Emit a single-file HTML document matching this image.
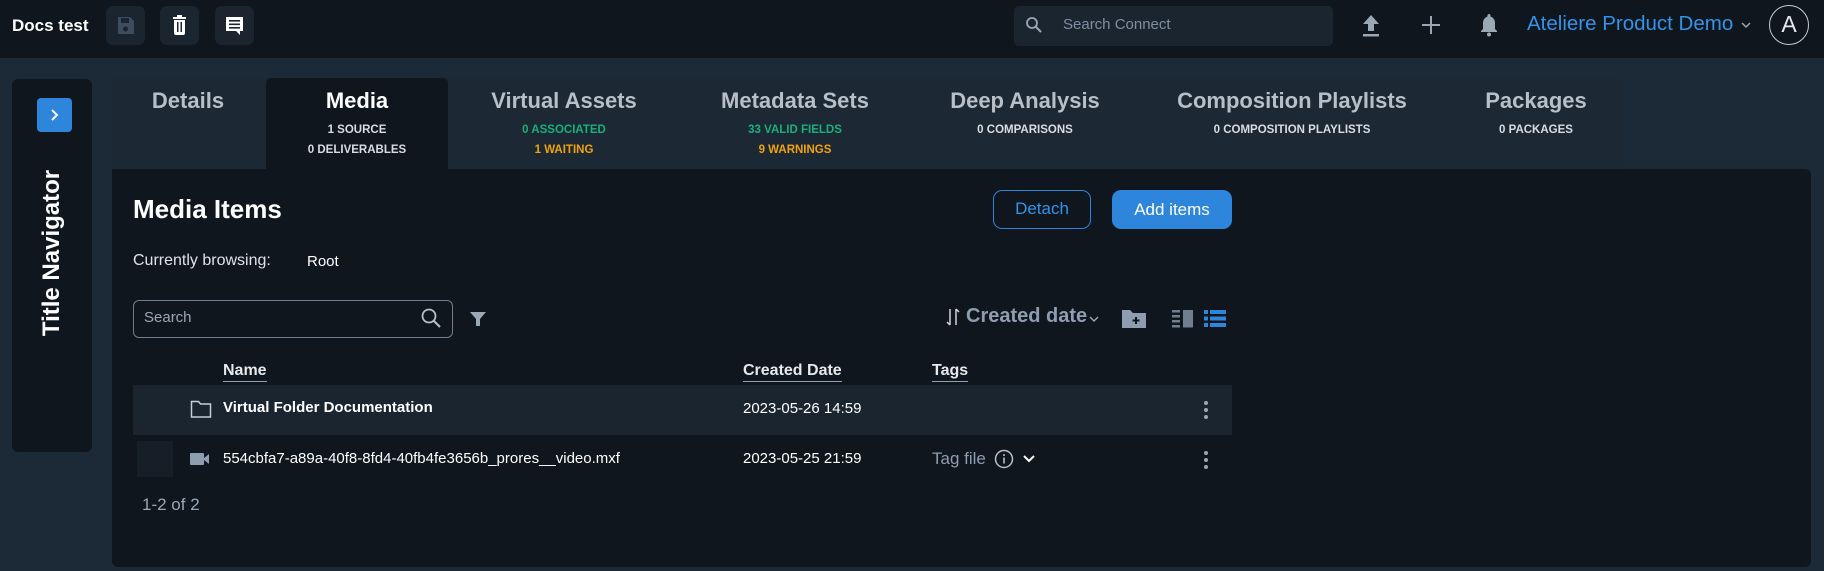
<!DOCTYPE html>
<html><head><meta charset="utf-8"><style>
*{box-sizing:border-box;margin:0;padding:0}
body{width:1824px;height:571px;overflow:hidden;background:#1b2a36;font-family:"Liberation Sans",sans-serif;color:#fff;position:relative}
.a{position:absolute}
.top{left:0;top:0;width:1824px;height:58px;background:#0f161e}
.ib{background:#1b2530;border-radius:7px;width:39px;height:39px;top:6px}
.tab{position:absolute;top:0;text-align:center;font-size:22px;font-weight:bold;color:#b7bfc8}
.tab .s{font-size:11.5px;font-weight:bold;color:#d8dde2;margin-top:6px;line-height:20px}
.th{font-size:16px;font-weight:bold;color:#e6e9ec;border-bottom:1.5px solid #8ea0b3;padding-bottom:1px}
</style></head><body>
<div class="a top"></div>
<div class="a" style="left:12px;top:16px;font-size:17px;font-weight:bold">Docs test</div>
<div class="a ib" style="left:106px"><svg width="39" height="39" viewBox="0 0 39 39"><path d="M12 11h12l4 4v13H12z" fill="#3d4d5d"/><rect x="15" y="12" width="8" height="5" fill="#1b2530"/><circle cx="19.5" cy="23" r="2.5" fill="#1b2530"/></svg></div>
<div class="a ib" style="left:160px"><svg width="39" height="39" viewBox="0 0 39 39"><rect x="13" y="11" width="13" height="2" fill="#fff"/><rect x="17" y="9" width="5" height="2" fill="#fff"/><path d="M14 14h11v13a2 2 0 0 1-2 2h-7a2 2 0 0 1-2-2z" fill="#fff"/><rect x="17" y="16" width="1.5" height="10" fill="#1b2530"/><rect x="20.5" y="16" width="1.5" height="10" fill="#1b2530"/></svg></div>
<div class="a ib" style="left:215px"><svg width="39" height="39" viewBox="0 0 39 39"><path d="M11 11h17v14h-3v4l-4-4H11z" fill="#fff"/><rect x="14" y="14" width="11" height="1.6" fill="#1b2530"/><rect x="14" y="17.5" width="11" height="1.6" fill="#1b2530"/><rect x="14" y="21" width="11" height="1.6" fill="#1b2530"/></svg></div>
<div class="a" style="left:1014px;top:6px;width:319px;height:40px;background:#1b2530;border-radius:5px"></div>
<svg class="a" style="left:1025px;top:16px" width="18" height="18" viewBox="0 0 18 18"><circle cx="7" cy="7" r="5" fill="none" stroke="#9aa7b5" stroke-width="1.8"/><path d="M11 11l5 5" stroke="#9aa7b5" stroke-width="2"/></svg>
<div class="a" style="left:1063px;top:16px;font-size:15px;color:#7f8fa0">Search Connect</div>
<svg class="a" style="left:1360px;top:13px" width="22" height="26" viewBox="0 0 22 26"><path d="M11 2l8 9h-5v7H8v-7H3z" fill="#9aa7b5"/><rect x="3" y="21" width="16" height="2.5" fill="#9aa7b5"/></svg>
<svg class="a" style="left:1420px;top:14px" width="22" height="22"><path d="M11 2v18M2 11h18" stroke="#9aa7b5" stroke-width="2"/></svg>
<svg class="a" style="left:1478px;top:12px" width="22" height="26" viewBox="0 0 22 26"><path d="M11 2c-1 0-1.5.7-1.5 1.5v1C6.5 5.5 5 8 5 11v6l-2 2v1h16v-1l-2-2v-6c0-3-1.5-5.5-4.5-6.5v-1C12.5 2.7 12 2 11 2z" fill="#9aa7b5"/><circle cx="11" cy="22.5" r="2" fill="#9aa7b5"/></svg>
<div class="a" style="left:1527px;top:12px;font-size:20.5px;color:#3393e8">Ateliere Product Demo</div>
<svg class="a" style="left:1740px;top:20px" width="12" height="10"><path d="M2 3l4 4 4-4" fill="none" stroke="#9aa7b5" stroke-width="1.5"/></svg>
<div class="a" style="left:1769px;top:5px;width:40px;height:40px;border:1.5px solid #c8ced4;border-radius:50%;text-align:center;line-height:37px;font-size:23px;color:#e6e9ec">A</div>

<div class="a" style="left:12px;top:79px;width:80px;height:373px;background:#0f161e;border-radius:6px"></div>
<div class="a" style="left:37px;top:98px;width:35px;height:34px;background:#2d86dc;border-radius:4px"></div>
<svg class="a" style="left:48px;top:107px" width="14" height="16"><path d="M4 3l5 5-5 5" fill="none" stroke="#fff" stroke-width="2"/></svg>
<div class="a" style="left:52px;top:253px;transform:translate(-50%,-50%) rotate(-90deg);white-space:nowrap;font-size:24px;font-weight:bold">Title Navigator</div>

<div class="a" style="left:112px;top:78px;width:1512px;height:92px;background:#1c2833;border-radius:5px 5px 0 0"></div>
<div class="a" style="left:112px;top:169px;width:1699px;height:398px;background:#0f161e;border-radius:0 6px 6px 6px"></div>
<div class="a" style="left:266px;top:78px;width:182px;height:92px;background:#0f161e;border-radius:5px 5px 0 0"></div>
<div class="a" style="left:0;top:88px;width:1824px;height:80px">
<div class="tab" style="left:128px;width:120px">Details</div>
<div class="tab" style="left:277px;width:160px;color:#fff">Media<div class="s">1 SOURCE<br>0 DELIVERABLES</div></div>
<div class="tab" style="left:454px;width:220px">Virtual Assets<div class="s"><span style="color:#19b07c">0 ASSOCIATED</span><br><span style="color:#f0a20c">1 WAITING</span></div></div>
<div class="tab" style="left:685px;width:220px">Metadata Sets<div class="s"><span style="color:#19b07c">33 VALID FIELDS</span><br><span style="color:#f0a20c">9 WARNINGS</span></div></div>
<div class="tab" style="left:915px;width:220px">Deep Analysis<div class="s">0 COMPARISONS</div></div>
<div class="tab" style="left:1152px;width:280px">Composition Playlists<div class="s">0 COMPOSITION PLAYLISTS</div></div>
<div class="tab" style="left:1446px;width:180px">Packages<div class="s">0 PACKAGES</div></div>
</div>

<div class="a" style="left:133px;top:194px;font-size:26px;font-weight:bold">Media Items</div>
<div class="a" style="left:993px;top:190px;width:98px;height:39px;border:1.5px solid #2d86dc;border-radius:9px;text-align:center;line-height:36px;font-size:17px;color:#3393e8">Detach</div>
<div class="a" style="left:1112px;top:190px;width:120px;height:39px;background:#2d86dc;border-radius:9px;text-align:center;line-height:39px;font-size:17px">Add items</div>
<div class="a" style="left:133px;top:252px;font-size:16px;color:#dfe3e7">Currently browsing:</div>
<div class="a" style="left:307px;top:253px;font-size:15px">Root</div>
<div class="a" style="left:133px;top:300px;width:320px;height:38px;border:1.5px solid #6f7f90;border-radius:6px"></div>
<div class="a" style="left:144px;top:309px;font-size:15px;color:#9aa7b5">Search</div>
<svg class="a" style="left:420px;top:307px" width="22" height="22"><circle cx="9" cy="9" r="6.5" fill="none" stroke="#b7c0ca" stroke-width="1.8"/><path d="M14 14l6 6" stroke="#b7c0ca" stroke-width="2"/></svg>
<svg class="a" style="left:468px;top:309px" width="20" height="20"><path d="M2 3h16l-6 7v7h-4v-7z" fill="#9aa7b5"/></svg>
<svg class="a" style="left:946px;top:306px" width="14" height="22"><path d="M4 3v16M1 16l3 3M10 19V3M10 3l3 3" stroke="#d0d6dc" stroke-width="1.5" fill="none"/></svg>
<div class="a" style="left:966px;top:305px;font-size:20px;font-weight:bold;color:#8e9db0">Created date</div>
<svg class="a" style="left:1088px;top:314px" width="12" height="10"><path d="M2 3l4 4 4-4" fill="none" stroke="#9aa7b5" stroke-width="1.5"/></svg>
<svg class="a" style="left:1121px;top:307px" width="26" height="22"><path d="M1 3h8l3 3h13v15H1z" fill="#8e9db0"/><path d="M15 10v7M11.5 13.5h7" stroke="#0f161e" stroke-width="2"/></svg>
<svg class="a" style="left:1172px;top:309px" width="22" height="19"><g fill="#6f7f90"><rect x="0" y="1" width="8" height="2.5"/><rect x="0" y="6" width="8" height="2.5"/><rect x="0" y="11" width="8" height="2.5"/><rect x="0" y="16" width="8" height="2.5"/><rect x="11" y="1" width="10" height="17.5"/></g></svg>
<svg class="a" style="left:1204px;top:309px" width="22" height="19"><g fill="#2d86dc"><rect x="0" y="1" width="4" height="4"/><rect x="6" y="1" width="16" height="4"/><rect x="0" y="7.5" width="4" height="4"/><rect x="6" y="7.5" width="16" height="4"/><rect x="0" y="14" width="4" height="4"/><rect x="6" y="14" width="16" height="4"/></g></svg>

<div class="a th" style="left:223px;top:362px">Name</div>
<div class="a th" style="left:743px;top:362px">Created Date</div>
<div class="a th" style="left:932px;top:362px">Tags</div>
<div class="a" style="left:133px;top:385px;width:1099px;height:50px;background:#1b2530"></div>
<svg class="a" style="left:190px;top:399px" width="22" height="20"><path d="M1.5 2.5h7l2 2.5h10v13H1.5z" fill="none" stroke="#c8ced4" stroke-width="1.5"/></svg>
<div class="a" style="left:223px;top:399px;font-size:15px;font-weight:bold">Virtual Folder Documentation</div>
<div class="a" style="left:743px;top:400px;font-size:15px">2023-05-26 14:59</div>
<svg class="a" style="left:1202px;top:400px" width="8" height="20"><circle cx="4" cy="3" r="2" fill="#9aa7b5"/><circle cx="4" cy="10" r="2" fill="#9aa7b5"/><circle cx="4" cy="17" r="2" fill="#9aa7b5"/></svg>
<div class="a" style="left:137px;top:441px;width:36px;height:36px;background:#161f28"></div>
<svg class="a" style="left:190px;top:451px" width="20" height="16"><rect x="0" y="2" width="14" height="12" rx="1" fill="#8e9db0"/><path d="M14 7l5-4v10l-5-4z" fill="#8e9db0"/></svg>
<div class="a" style="left:223px;top:450px;font-size:15px">554cbfa7-a89a-40f8-8fd4-40fb4fe3656b_prores__video.mxf</div>
<div class="a" style="left:743px;top:450px;font-size:15px">2023-05-25 21:59</div>
<div class="a" style="left:932px;top:449px;font-size:17px;color:#8e9db0">Tag file</div>
<svg class="a" style="left:994px;top:449px" width="20" height="20"><circle cx="10" cy="10" r="8.5" fill="none" stroke="#b7c0ca" stroke-width="1.5"/><rect x="9.2" y="8.5" width="1.6" height="6" fill="#b7c0ca"/><circle cx="10" cy="6" r="1" fill="#b7c0ca"/></svg>
<svg class="a" style="left:1022px;top:453px" width="14" height="12"><path d="M2 3l5 5 5-5" fill="none" stroke="#fff" stroke-width="2"/></svg>
<svg class="a" style="left:1202px;top:450px" width="8" height="20"><circle cx="4" cy="3" r="2" fill="#9aa7b5"/><circle cx="4" cy="10" r="2" fill="#9aa7b5"/><circle cx="4" cy="17" r="2" fill="#9aa7b5"/></svg>
<div class="a" style="left:142px;top:495px;font-size:17px;color:#9aa7b5">1-2 of 2</div>
</body></html>
